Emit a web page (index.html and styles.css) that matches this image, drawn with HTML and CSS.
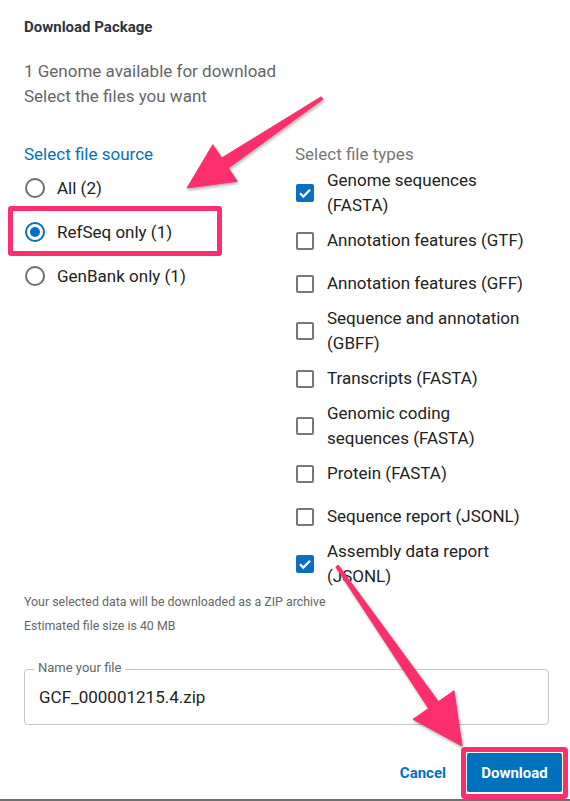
FILE: index.html
```html
<!DOCTYPE html>
<html lang="en">
<head>
  <meta charset="UTF-8" />
  <title>Download Package</title>
  <link rel="stylesheet" href="styles.css">
</head>
<body>
  <div class="dialog">
    <h2 class="title">Download Package</h2>
    <p class="intro">1 Genome available for download<br>Select the files you want</p>

    <div class="columns">
      <!-- File source -->
      <div class="source">
        <div class="group-label group-label--blue">Select file source</div>
        <label class="radio-row"><span class="radio"></span>All (2)</label>
        <label class="radio-row radio-row--marked"><span class="radio radio--checked"></span>RefSeq only (1)</label>
        <label class="radio-row"><span class="radio"></span>GenBank only (1)</label>
      </div>

      <!-- File types -->
      <div class="types">
        <div class="group-label">Select file types</div>
        <label class="check-row">
          <span class="box box--checked"><svg viewBox="0 0 18 18"><path d="M4 9.3l3.3 3.3L14 5.8"/></svg></span>
          <span class="check-text">Genome sequences<br>(FASTA)</span>
        </label>
        <label class="check-row">
          <span class="box"></span>
          <span class="check-text">Annotation features (GTF)</span>
        </label>
        <label class="check-row">
          <span class="box"></span>
          <span class="check-text">Annotation features (GFF)</span>
        </label>
        <label class="check-row">
          <span class="box"></span>
          <span class="check-text">Sequence and annotation<br>(GBFF)</span>
        </label>
        <label class="check-row">
          <span class="box"></span>
          <span class="check-text">Transcripts (FASTA)</span>
        </label>
        <label class="check-row">
          <span class="box"></span>
          <span class="check-text">Genomic coding<br>sequences (FASTA)</span>
        </label>
        <label class="check-row">
          <span class="box"></span>
          <span class="check-text">Protein (FASTA)</span>
        </label>
        <label class="check-row">
          <span class="box"></span>
          <span class="check-text">Sequence report (JSONL)</span>
        </label>
        <label class="check-row">
          <span class="box box--checked"><svg viewBox="0 0 18 18"><path d="M4 9.3l3.3 3.3L14 5.8"/></svg></span>
          <span class="check-text">Assembly data report<br>(JSONL)</span>
        </label>
      </div>
    </div>

    <p class="note">Your selected data will be downloaded as a ZIP archive</p>
    <p class="note">Estimated file size is 40 MB</p>

    <div class="field">
      <span class="field-label">Name your file</span>
      <span class="field-value">GCF_000001215.4.zip</span>
    </div>

    <div class="actions">
      <button class="btn-cancel">Cancel</button>
      <button class="btn-download">Download</button>
    </div>
  </div>

  <!-- Annotation arrows -->
  <svg class="arrows" width="570" height="801" viewBox="0 0 570 801">
    <polygon points="321.2,96.8 221.7,158 212.8,144.7 187,188 237.2,181.3 228.3,168 322.8,99.2" />
    <polygon points="335.8,566.9 428.6,708.4 413,719.3 462,746 454,690.7 438.4,701.6 338.2,565.1" />
  </svg>
</body>
</html>
```

FILE: styles.css
```css
*, *::before, *::after {
  box-sizing: border-box;
}
html, body {
  margin: 0;
  padding: 0;
  background: #fff;
  font-family: Roboto, 'Liberation Sans', sans-serif;
}

.dialog {
  position: relative;
  height: 801px;
  padding: 17px 21px 0 24px;
  border-bottom: 2px solid #6f6f6f;
  overflow: hidden;
}

.title {
  margin: 0;
  font-size: 15px;
  line-height: 20px;
  font-weight: 700;
  color: #2c3440;
}

.intro {
  margin: 22px 0 0 0;
  font-size: 17px;
  line-height: 25px;
  color: #666;
}

/* Two columns */
.columns {
  display: grid;
  grid-template-columns: 271px 1fr;
  margin-top: 33px;
}

.group-label {
  font-size: 17px;
  line-height: 25px;
  color: #777;
}
.group-label--blue {
  color: #0071bc;
  margin-bottom: -1px;
}

/* Radios */
.radio-row {
  position: relative;
  display: flex;
  align-items: center;
  gap: 12px;
  height: 44px;
  font-size: 17px;
  color: #222;
}
.radio {
  width: 20px;
  height: 20px;
  margin-left: 1px;
  border: 2px solid #6e6e6e;
  border-radius: 50%;
  display: flex;
  align-items: center;
  justify-content: center;
}
.radio--checked {
  border-color: #0071bc;
}
.radio--checked::after {
  content: "";
  width: 10px;
  height: 10px;
  border-radius: 50%;
  background: #0071bc;
}
.radio-row--marked::after {
  content: "";
  position: absolute;
  left: -16px;
  top: -4px;
  width: 214px;
  height: 50px;
  border: 5px solid #fb2f6d;
  border-radius: 3px;
}

/* Checkboxes */
.check-row {
  display: flex;
  align-items: center;
  gap: 13px;
  min-height: 43px;
  padding: 1px 0;
  font-size: 17px;
  color: #222;
}
.box {
  flex: none;
  width: 18px;
  height: 18px;
  margin-left: 1px;
  border: 2px solid #777;
  border-radius: 2px;
}
.box--checked {
  border-color: #0b6fc1;
  background: #0b6fc1;
  border-width: 0;
}
.box svg {
  display: block;
  width: 18px;
  height: 18px;
  fill: none;
  stroke: #fff;
  stroke-width: 2.2;
}
.check-text {
  line-height: 25px;
  white-space: nowrap;
}

/* Notes */
.note {
  margin: 0;
  font-size: 12.4px;
  line-height: 24px;
  color: #666;
}

/* Outlined text field */
.field {
  position: relative;
  display: flex;
  align-items: center;
  width: 525px;
  height: 56px;
  margin-top: 31px;
  padding: 0 14px;
  border: 1px solid #c6c6c6;
  border-radius: 4px;
}
.field-label {
  position: absolute;
  top: -10px;
  left: 9px;
  padding: 0 4px;
  background: #fff;
  font-size: 13px;
  line-height: 16px;
  color: #666;
}
.field-value {
  font-size: 17px;
  line-height: 25px;
  color: #222;
}

/* Buttons */
.actions {
  display: flex;
  justify-content: flex-end;
  align-items: center;
  gap: 21px;
  margin-top: 28px;
  margin-right: -13px;
}
.btn-cancel,
.btn-download {
  font-family: Roboto, 'Liberation Sans', sans-serif;
  font-size: 15px;
  font-weight: 700;
  border: none;
  cursor: pointer;
}
.btn-cancel {
  padding: 0;
  background: transparent;
  color: #0071bc;
}
.btn-download {
  position: relative;
  width: 95px;
  height: 39px;
  background: #0071bc;
  color: #fff;
  border-radius: 2px;
}
.btn-download::after {
  content: "";
  position: absolute;
  left: -6px;
  top: -6px;
  right: -6px;
  bottom: -7px;
  border: 5px solid #fb2f6d;
  border-radius: 4px;
}

/* Annotation overlay */
.arrows {
  position: absolute;
  top: 0;
  left: 0;
  pointer-events: none;
  filter: drop-shadow(1px 2px 1.5px rgba(0, 0, 0, 0.3));
}
.arrows polygon {
  fill: #fb2f6d;
  stroke: #fb2f6d;
  stroke-width: 1;
  stroke-linejoin: round;
}
```
